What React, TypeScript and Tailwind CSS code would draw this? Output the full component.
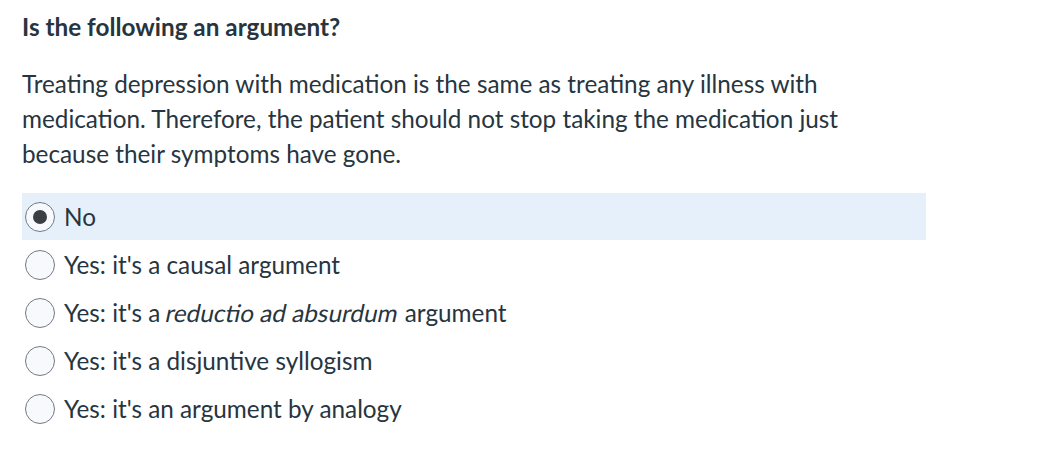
import React from "react";

const options: { id: number; label: React.ReactNode }[] = [
  { id: 1, label: "No" },
  { id: 2, label: "Yes: it's a causal argument" },
  {
    id: 3,
    label: (
      <>
        Yes: it's a <em className="inline-block -skew-x-12 not-italic">reductio ad absurdum</em> argument
      </>
    ),
  },
  { id: 4, label: "Yes: it's a disjuntive syllogism" },
  { id: 5, label: "Yes: it's an argument by analogy" },
];

const Radio = ({ checked }: { checked: boolean }) => (
  <span className="flex h-[30px] w-[30px] shrink-0 items-center justify-center rounded-full border border-[#6f7b85] bg-[#f7f9fd]">
    {checked && <span className="h-[14px] w-[14px] rounded-full bg-[#3b3f44]" />}
  </span>
);

export default function App() {
  const selected = 1;
  return (
    <div
      className="min-h-[453px] bg-white pl-[22px] pt-[13px] text-[#273540]"
      style={{ fontFamily: "Lato, 'Open Sans', sans-serif" }}
    >
      <h1 className="text-[24.3px] font-bold leading-[28px]">Is the following an argument?</h1>
      <p className="mt-[25px] w-[870px] text-[24.3px] leading-[35px]">
        Treating depression with medication is the same as treating any illness with medication.
        Therefore, the patient should not stop taking the medication just because their symptoms
        have gone.
      </p>
      <div className="mt-[22px] flex w-[904px] flex-col gap-[1px]">
        {options.map((o) => (
          <div
            key={o.id}
            className={
              "flex h-[47px] items-center gap-[9px] pl-[3px] text-[24.3px] " +
              (o.id === selected ? "bg-[#e6f0fa]" : "")
            }
          >
            <Radio checked={o.id === selected} />
            <span className="pt-[2px]">{o.label}</span>
          </div>
        ))}
      </div>
    </div>
  );
}
